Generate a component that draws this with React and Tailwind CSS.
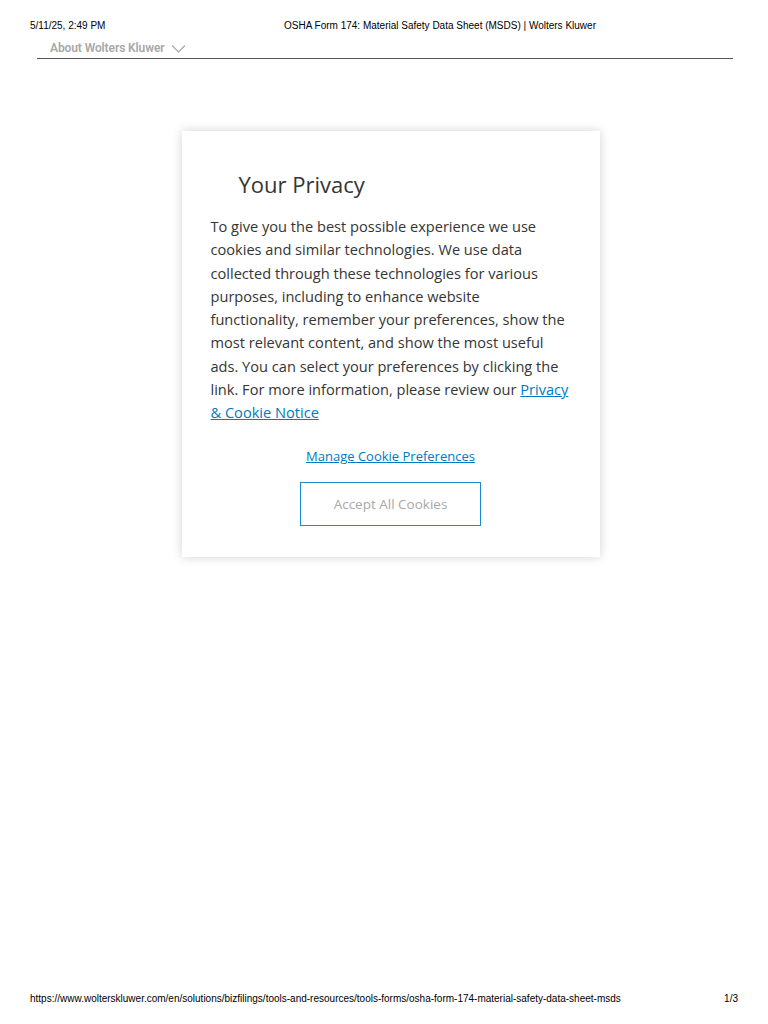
export default function App() {
  return (
    <div className="relative w-[768px] h-[1024px] bg-white overflow-hidden">
      <div className="flex px-[30px] pt-[20px] text-[10px] leading-[12px] text-black" style={{ fontFamily: '"Liberation Sans", Arial, sans-serif' }}>
        <div className="w-[254px]">5/11/25, 2:49 PM</div>
        <div>OSHA Form 174: Material Safety Data Sheet (MSDS) | Wolters Kluwer</div>
      </div>
      <div className="mx-[37px] mt-[9px] w-[696px] border-b border-[#555] h-[18px] flex items-start pl-[13px]">
        <span className="text-[12px] leading-[14px] font-semibold text-[#a8a8a8] tracking-[-0.1px]" style={{ fontFamily: '"Roboto", "Open Sans", sans-serif' }}>About Wolters Kluwer</span>
        <svg width="15" height="9" viewBox="0 0 15 9" className="ml-[6px] mt-[3px]" fill="none" stroke="#a8a8a8" strokeWidth="1.2"><path d="M1 1.5 L7.5 8 L14 1.5" /></svg>
      </div>
      <div className="flex justify-center pt-[72px] pl-[13px]">
        <div className="w-[418px] h-[426px] bg-white shadow-[0_0_10px_rgba(0,0,0,0.18)] pt-[38px] px-[29px]" style={{ fontFamily: '"Open Sans", "Noto Sans", sans-serif' }}>
          <h2 className="pl-[28px] text-[22px] leading-[30px] text-[#353535]">Your Privacy</h2>
          <p className="mt-[16px] text-[14.6px] leading-[23.3px] text-[#353535]">
            To give you the best possible experience we use cookies and similar technologies. We use data collected through these technologies for various purposes, including to enhance website functionality, remember your preferences, show the most relevant content, and show the most useful ads. You can select your preferences by clicking the link. For more information, please review our{' '}
            <a className="text-[#007ac3] underline">Privacy &amp; Cookie Notice</a>
          </p>
          <div className="mt-[18px] text-center">
            <a className="text-[13px] leading-[18px] text-[#007ac3] underline">Manage Cookie Preferences</a>
          </div>
          <div className="mt-[15px] flex justify-center">
            <button className="w-[181px] h-[44px] border border-[#1a8ad0] text-[13.5px] text-[#a8a8a8]">Accept All Cookies</button>
          </div>
        </div>
      </div>
      <div className="absolute left-0 right-0 top-[993px] flex px-[30px] text-[10px] leading-[12px] text-black" style={{ fontFamily: '"Liberation Sans", Arial, sans-serif' }}>
        <div className="flex-1">https://www.wolterskluwer.com/en/solutions/bizfilings/tools-and-resources/tools-forms/osha-form-174-material-safety-data-sheet-msds</div>
        <div>1/3</div>
      </div>
    </div>
  );
}
